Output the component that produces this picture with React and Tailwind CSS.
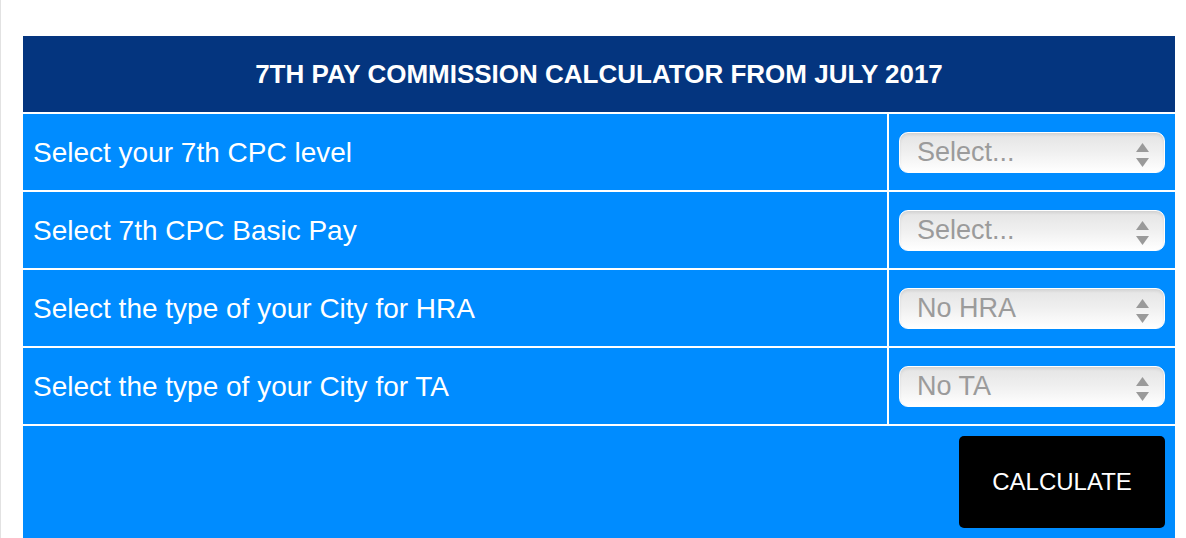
import React from 'react';

const rows = [
  { label: 'Select your 7th CPC level', value: 'Select...' },
  { label: 'Select 7th CPC Basic Pay', value: 'Select...' },
  { label: 'Select the type of your City for HRA', value: 'No HRA' },
  { label: 'Select the type of your City for TA', value: 'No TA' },
];

function FakeSelect({ value }) {
  return (
    <div className="relative flex h-[41px] w-full items-center rounded-[9px] border border-white bg-gradient-to-b from-[#e4e4e4] via-[#f0f0f0] to-white pl-[17px] shadow-[inset_0_2px_3px_rgba(0,0,0,0.08)]">
      <span className="text-[27px] leading-none text-[#9b9b9b]">{value}</span>
      {/* up / down arrows */}
      <svg className="absolute right-[15px] top-[10px]" width="13" height="25" viewBox="0 0 13 25">
        <polygon points="6.5,0 13,9 0,9" fill="#9a9a9a" />
        <polygon points="0,15 13,15 6.5,24" fill="#9a9a9a" />
      </svg>
    </div>
  );
}

function App() {
  return (
    <div
      className="min-h-[538px] w-full border-l border-[#e2e2e2] bg-white pl-[22px] pt-[36px]"
      style={{ fontFamily: '"Liberation Sans", Arial, sans-serif' }}
    >
      <div className="flex w-[1152px] flex-col gap-[2px]">
        <div className="flex h-[76px] items-center justify-center bg-[#04357f] pt-[1px] text-[26px] font-bold text-white">
          7TH PAY COMMISSION CALCULATOR FROM JULY 2017
        </div>

        {rows.map((row) => (
          <div key={row.label} className="grid h-[76px] grid-cols-[864px_286px] gap-[2px]">
            <div className="flex items-center bg-[#008cff] pl-[10px] pt-[2px] text-[28px] text-white">
              {row.label}
            </div>
            <div className="flex items-center bg-[#008cff] px-[10px]">
              <FakeSelect value={row.value} />
            </div>
          </div>
        ))}

        <div className="flex h-[112px] justify-end bg-[#008cff] pr-[10px] pt-[10px]">
          <button className="flex h-[92px] w-[206px] items-center justify-center rounded-[5px] bg-black text-[24px] text-white">
            CALCULATE
          </button>
        </div>
      </div>
    </div>
  );
}

export default App;
